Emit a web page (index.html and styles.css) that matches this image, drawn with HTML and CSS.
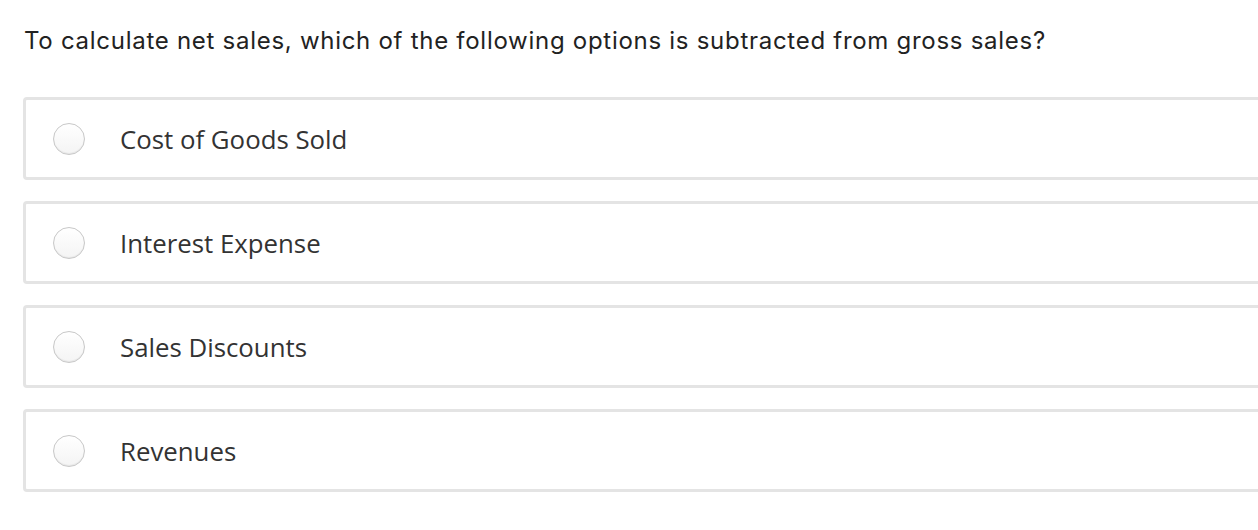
FILE: index.html
```html
<!DOCTYPE html>
<html>
<head>
<meta charset="utf-8">
<link rel="stylesheet" href="styles.css">
</head>
<body>
<div class="page">
  <p class="question">To calculate net sales, which of the following options is subtracted from gross sales?</p>
  <div class="options">
    <label class="option"><span class="radio"></span><span class="label">Cost of Goods Sold</span></label>
    <label class="option"><span class="radio"></span><span class="label">Interest Expense</span></label>
    <label class="option"><span class="radio"></span><span class="label">Sales Discounts</span></label>
    <label class="option"><span class="radio"></span><span class="label">Revenues</span></label>
  </div>
</div>
</body>
</html>
```
FILE: styles.css
```css
html, body {
  margin: 0;
  padding: 0;
  background: #ffffff;
  overflow: hidden;
}
.page {
  padding: 23px 0 0 23px;
}
.question {
  margin: 0 0 0 1px;
  font-family: Inter, "Liberation Sans", sans-serif;
  font-size: 24px;
  letter-spacing: 0.72px;
  line-height: 36px;
  color: #222222;
}
.options {
  margin-top: 38px;
  display: flex;
  flex-direction: column;
  gap: 21px;
  margin-right: -10px;
}
.option {
  display: flex;
  align-items: center;
  height: 77px;
  border: 3px solid #e4e4e4;
  border-radius: 4px;
  padding-left: 27px;
  background: #fff;
}
.radio {
  width: 30px;
  height: 30px;
  border: 1px solid #c8c8c8;
  border-radius: 50%;
  background: linear-gradient(#ffffff, #f4f4f4);
  box-shadow: inset 0 -1px 1px rgba(0,0,0,0.06);
  flex: none;
}
.label {
  margin-left: 35px;
  font-family: "Open Sans", sans-serif;
  font-size: 25.8px;
  color: #333333;
}
```
